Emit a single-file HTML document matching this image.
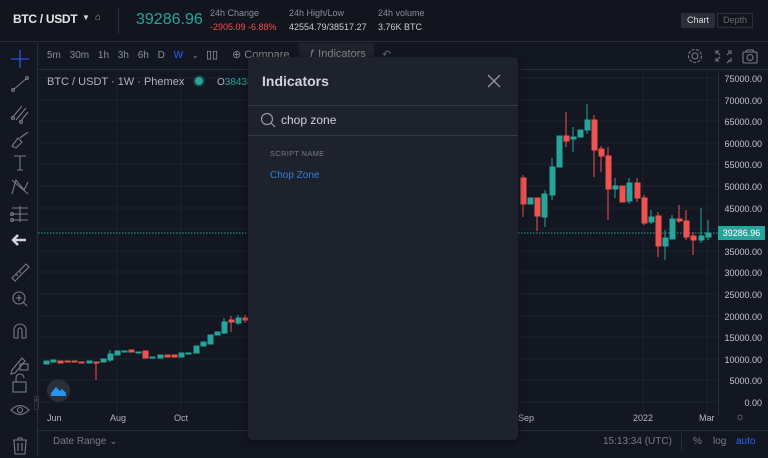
<!DOCTYPE html>
<html><head><meta charset="utf-8"><style>
*{margin:0;padding:0;box-sizing:border-box}
body{width:768px;height:456px;overflow:hidden;background:#131722;font-family:"Liberation Sans",sans-serif;position:relative;color:#b2b5be}
.a{position:absolute;white-space:nowrap}
</style></head><body>
<!-- header -->
<div class="a" style="left:0;top:0;width:768px;height:42px;background:#12151d;border-bottom:1px solid #2a2e39"></div>
<div class="a" style="left:13px;top:12px;font-size:12px;font-weight:bold;color:#e6e6e6;letter-spacing:-0.3px">BTC / USDT</div>
<div class="a" style="left:82px;top:13px;font-size:8px;color:#ddd">▼</div>
<div class="a" style="left:95px;top:12px;font-size:10px;color:#999">⌂</div>
<div class="a" style="left:118px;top:8px;width:1px;height:26px;background:#2a2e39"></div>
<div class="a" style="left:136px;top:11px;font-size:16px;color:#26a69a;font-weight:500">39286.96</div>
<div class="a" style="left:210px;top:8px;font-size:9px;color:#8a8e99">24h Change</div>
<div class="a" style="left:210px;top:22px;font-size:9px;color:#ef5350">-2905.09 -6.88%</div>
<div class="a" style="left:289px;top:8px;font-size:9px;color:#8a8e99">24h High/Low</div>
<div class="a" style="left:289px;top:22px;font-size:9px;color:#ccc">42554.79/38517.27</div>
<div class="a" style="left:378px;top:8px;font-size:9px;color:#8a8e99">24h volume</div>
<div class="a" style="left:378px;top:22px;font-size:9px;color:#ccc">3.76K BTC</div>
<div class="a" style="left:681px;top:13px;width:34px;height:15px;background:#2a2e39;border-radius:2px;font-size:9px;color:#ddd;text-align:center;line-height:15px">Chart</div>
<div class="a" style="left:717px;top:13px;width:36px;height:15px;border:1px solid #2a2e39;font-size:9px;color:#666;text-align:center;line-height:13px">Depth</div>
<!-- toolbar row -->
<div class="a" style="left:38px;top:43px;width:730px;height:27px;border-bottom:1px solid #2a2e39"></div>
<div class="a" style="left:47px;top:50px;font-size:10px;color:#8a8e99;word-spacing:6px">5m 30m 1h 3h 6h D <span style="color:#2962ff">W</span> <span style="font-size:8px">⌄</span></div>
<div class="a" style="left:206px;top:48px;font-size:11px;color:#aaa">▯▯</div>
<div class="a" style="left:232px;top:48px;font-size:11px;color:#888">⊕ Compare</div>
<div class="a" style="left:299px;top:43px;width:75px;height:27px;background:#1e222d"></div>
<div class="a" style="left:309px;top:48px;font-size:11px;color:#888">ƒ Indicators</div>
<div class="a" style="left:382px;top:48px;font-size:11px;color:#666">↶</div>
<svg class="a" style="left:686px;top:48px" width="80" height="18" viewBox="0 0 80 18" fill="none" stroke="#787b86" stroke-width="1.1"><circle cx="9" cy="8" r="3"/><circle cx="9" cy="8" r="6.5" stroke-dasharray="3 1.5"/><path d="M33 3h-3v3M42 3h3v3M33 13h-3v-3M42 13h3v-3M31 4l3 3M44 4l-3 3M31 12l3-3M44 12l-3 3"/><rect x="57" y="4" width="14" height="11" rx="1"/><circle cx="64" cy="9.5" r="3"/><path d="M60 4l1-2h6l1 2"/></svg>
<!-- left toolbar -->
<div class="a" style="left:0;top:43px;width:38px;height:413px;border-right:1px solid #2a2e39;background:#131722"></div>
<svg class="a" style="left:8px;top:48px" width="24" height="410" viewBox="0 0 24 410" fill="none" stroke="#787b86" stroke-width="1.1">
<path d="M12 2v18M3 11h18" stroke="#2962ff"/>
<path d="M5 42l14-12"/><circle cx="5" cy="42" r="1.5"/><circle cx="19" cy="30" r="1.5"/>
<path d="M4 70l10-12M8 72l10-12M12 74l8-10"/><circle cx="5" cy="70" r="1.5"/><circle cx="13" cy="74" r="1.5"/>
<path d="M4 98l6-8 4 4-6 6zM12 90l8-6"/>
<path d="M6 108h12M12 108v14M9 122h6"/>
<path d="M4 146l4-14 8 10 4-8M4 132l16 14"/>
<path d="M4 160h16M4 166h16M4 172h16M12 158v16"/><circle cx="4" cy="166" r="1.4"/><circle cx="4" cy="172" r="1.4"/>
<path d="M18 192h-12M10 187l-5 5 5 5" stroke="#d1d4dc" stroke-width="2.5"/>
<path d="M4 230l14-14 3 3-14 14zM8 226l2 2M11 223l2 2"/>
<circle cx="11" cy="250" r="6"/><path d="M8 250h6M11 247v6M15 254l4 4"/>
<path d="M6 290v-8a6 6 0 0 1 12 0v8h-4v-8a2 2 0 0 0-4 0v8z"/>
<path d="M4 322l10-12 3 3-10 12-4 1z"/><rect x="12" y="316" width="8" height="6"/>
<rect x="5" y="334" width="13" height="10"/><path d="M8 334v-4a4 4 0 0 1 8 0"/>
<path d="M3 362q9-9 18 0q-9 9-18 0z"/><circle cx="12" cy="362" r="2.5"/>
<path d="M5 392h14M10 392v-2h4v2M6 392l1 14h10l1-14M10 395v8M14 395v8"/>
</svg>
<!-- chart grid -->
<svg class="a" style="left:38px;top:71px" width="680" height="345">
<g stroke="#1e222d" stroke-width="1">
<path d="M0 7h680M0 29h680M0 50h680M0 72h680M0 93h680M0 115h680M0 137h680M0 158h680M0 180h680M0 201h680M0 223h680M0 245h680M0 266h680M0 288h680M0 309h680M0 331h680"/>
<path d="M79 0v345M143 0v345M482 0v345M605 0v345M669 0v345"/>
</g>
<path d="M0 162h680" stroke="#26a69a" stroke-dasharray="1.5 1.5"/>
</svg>
<div class="a" style="left:47px;top:76px;font-size:11px;color:#b2b5be">BTC / USDT · 1W · Phemex</div>
<div class="a" style="left:195px;top:77px;width:8px;height:8px;border-radius:50%;background:#26a69a;box-shadow:0 0 0 2px #1b3b3a"></div>
<div class="a" style="left:217px;top:77px;font-size:10px;color:#b2b5be">O<span style="color:#26a69a">38438</span></div>
<!-- candles -->
<svg class="a" style="left:0;top:0" width="718" height="420">
<g fill="#26a69a" stroke="#26a69a">
<rect x="44" y="361" width="5" height="3"/><rect x="51" y="360" width="5" height="2"/><rect x="87" y="361" width="5" height="2"/><rect x="101" y="359" width="5" height="3"/><rect x="108" y="354" width="5" height="6"/><rect x="115" y="351" width="5" height="4"/><rect x="122" y="351" width="5" height="1"/><rect x="136" y="352" width="5" height="1"/><rect x="150" y="357" width="5" height="1"/><rect x="158" y="355" width="5" height="3"/><rect x="179" y="353" width="5" height="4"/><rect x="186" y="353" width="5" height="1"/><rect x="194" y="346" width="5" height="7"/><rect x="201" y="342" width="5" height="4"/><rect x="208" y="335" width="5" height="9"/><rect x="215" y="332" width="5" height="3"/><rect x="222" y="322" width="5" height="11"/><rect x="236" y="318" width="5" height="5"/>
<path d="M110 350v12M224 318v16M238 315v10" />
<rect x="528" y="198" width="5" height="6"/><rect x="542" y="194" width="5" height="23"/><rect x="550" y="167" width="5" height="28"/><rect x="557" y="136" width="5" height="31"/><rect x="571" y="137" width="5" height="2"/><rect x="578" y="130" width="5" height="7"/><rect x="585" y="120" width="5" height="10"/><rect x="613" y="186" width="5" height="3"/><rect x="627" y="183" width="5" height="18"/><rect x="649" y="217" width="5" height="5"/><rect x="663" y="238" width="5" height="8"/><rect x="670" y="219" width="5" height="20"/><rect x="699" y="236" width="5" height="4"/><rect x="706" y="233" width="5" height="4"/>
<path d="M545 190v37M552 158v42M573 127v25M587 104v30M615 178v20M629 178v26M651 210v14M665 230v30M672 215v24M701 208v35M708 220v20" fill="none"/>
</g>
<g fill="#ef5350" stroke="#ef5350">
<rect x="58" y="361" width="5" height="2"/><rect x="65" y="361" width="5" height="1"/><rect x="72" y="361" width="5" height="1"/><rect x="79" y="362" width="5" height="1"/><rect x="94" y="362" width="5" height="1"/><rect x="129" y="350" width="5" height="2"/><rect x="143" y="351" width="5" height="7"/><rect x="165" y="355" width="5" height="2"/><rect x="172" y="355" width="5" height="2"/><rect x="229" y="320" width="5" height="2"/><rect x="243" y="318" width="5" height="2"/>
<path d="M96 362v18M231 316v16M245 315v8" fill="none"/>
<rect x="521" y="178" width="5" height="26"/><rect x="535" y="198" width="5" height="18"/><rect x="564" y="136" width="5" height="5"/><rect x="592" y="120" width="5" height="30"/><rect x="599" y="149" width="5" height="7"/><rect x="606" y="156" width="5" height="33"/><rect x="620" y="186" width="5" height="16"/><rect x="635" y="183" width="5" height="15"/><rect x="642" y="198" width="5" height="25"/><rect x="656" y="216" width="5" height="30"/><rect x="677" y="219" width="5" height="2"/><rect x="684" y="221" width="5" height="16"/><rect x="691" y="236" width="5" height="4"/>
<path d="M523 175v42M537 198v33M566 112v35M594 115v62M601 146v26M608 147v73M637 178v24M644 195v30M658 212v45M679 205v18M686 210v30M693 232v23" fill="none"/>
</g>
</svg>
<!-- price axis -->
<div class="a" style="left:718px;top:71px;width:50px;height:345px;background:#131722;border-left:1px solid #2a2e39"></div>
<div class="a" style="left:722px;top:69px;font-size:9px;color:#c4c6cc;line-height:21.6px;text-align:right;width:40px">75000.00<br>70000.00<br>65000.00<br>60000.00<br>55000.00<br>50000.00<br>45000.00<br><br>35000.00<br>30000.00<br>25000.00<br>20000.00<br>15000.00<br>10000.00<br>5000.00<br>0.00</div>
<div class="a" style="left:718px;top:226px;width:47px;height:14px;background:#26a69a;color:#fff;font-size:9px;line-height:14px;text-align:center">39286.96</div>
<!-- time axis -->
<div class="a" style="left:47px;top:413px;font-size:9px;color:#b2b5be">Jun</div>
<div class="a" style="left:110px;top:413px;font-size:9px;color:#b2b5be">Aug</div>
<div class="a" style="left:174px;top:413px;font-size:9px;color:#b2b5be">Oct</div>
<div class="a" style="left:518px;top:413px;font-size:9px;color:#b2b5be">Sep</div>
<div class="a" style="left:633px;top:413px;font-size:9px;color:#b2b5be">2022</div>
<div class="a" style="left:699px;top:413px;font-size:9px;color:#b2b5be">Mar</div>
<div class="a" style="left:735px;top:411px;font-size:11px;color:#888">☼</div>
<div class="a" style="left:47px;top:379px;width:23px;height:23px;border-radius:50%;background:#2a2e39"></div>
<svg class="a" style="left:50px;top:383px" width="17" height="14" viewBox="0 0 17 14"><path d="M1 10l5-6 4 4 2-2 4 4v3H1z" fill="#2196f3"/></svg>
<div class="a" style="left:34px;top:396px;width:5px;height:14px;border:1px solid #333;font-size:7px;color:#888">‹</div>
<!-- bottom bar -->
<div class="a" style="left:38px;top:430px;width:730px;height:1px;background:#2a2e39"></div>
<div class="a" style="left:53px;top:436px;font-size:10px;color:#787b86">Date Range ⌄</div>
<div class="a" style="left:603px;top:436px;font-size:10px;color:#787b86">15:13:34 (UTC)</div>
<div class="a" style="left:681px;top:433px;width:1px;height:18px;background:#2a2e39"></div>
<div class="a" style="left:693px;top:436px;font-size:10px;color:#787b86">%</div>
<div class="a" style="left:713px;top:436px;font-size:10px;color:#787b86">log</div>
<div class="a" style="left:736px;top:436px;font-size:10px;color:#2962ff">auto</div>
<!-- modal -->
<div class="a" style="left:248px;top:57px;width:270px;height:383px;background:#1e222d;border-radius:4px;box-shadow:0 2px 8px rgba(0,0,0,.5)"></div>
<div class="a" style="left:262px;top:73px;font-size:14px;font-weight:bold;color:#d1d4dc">Indicators</div>
<svg class="a" style="left:487px;top:74px" width="14" height="14"><path d="M1 1l12 12M13 1L1 13" stroke="#9598a1" stroke-width="1.3"/></svg>
<div class="a" style="left:248px;top:105px;width:270px;height:1px;background:#363a45"></div>
<svg class="a" style="left:260px;top:112px" width="16" height="16" fill="none" stroke="#9598a1" stroke-width="1.2"><circle cx="7" cy="7" r="5.5"/><path d="M11 11l4 4"/></svg>
<div class="a" style="left:281px;top:113px;font-size:12px;color:#d1d4dc">chop zone</div>
<div class="a" style="left:248px;top:135px;width:270px;height:1px;background:#363a45"></div>
<div class="a" style="left:270px;top:149px;font-size:7.5px;color:#787b86;letter-spacing:.3px">SCRIPT NAME</div>
<div class="a" style="left:270px;top:170px;font-size:10px;color:#2f7fd4">Chop Zone</div>
</body></html>
